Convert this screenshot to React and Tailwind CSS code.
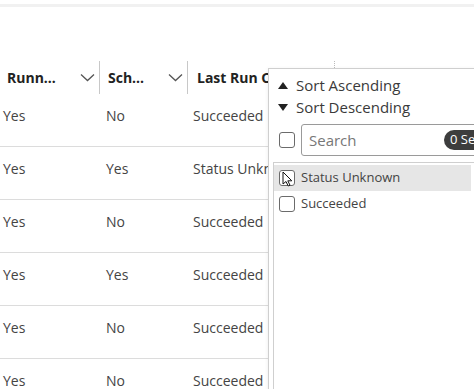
import React from "react";

const rows = [
  ["Yes", "No", "Succeeded"],
  ["Yes", "Yes", "Status Unknown"],
  ["Yes", "No", "Succeeded"],
  ["Yes", "Yes", "Succeeded"],
  ["Yes", "No", "Succeeded"],
  ["Yes", "No", "Succeeded"],
];

function Chevron() {
  return (
    <svg width="15" height="9" viewBox="0 0 15 9" className="shrink-0">
      <path d="M1 1.5 L7.5 7.5 L14 1.5" fill="none" stroke="#555" strokeWidth="1.3" />
    </svg>
  );
}

function Box({ children }) {
  return (
    <div className="relative w-[16px] h-[16px] shrink-0 rounded-[3px] border border-[#6b6b6b] bg-white">
      {children}
    </div>
  );
}

export default function App() {
  return (
    <div
      className="relative w-[474px] h-[389px] overflow-hidden bg-white text-[#3b3b3b]"
      style={{ fontFamily: '"Open Sans", "Noto Sans", sans-serif' }}
    >
      <div className="mt-[4px] h-[3px] bg-[#f1f1f1]" />

      {/* table */}
      <div className="mt-[53px] w-[268px] overflow-hidden">
        <div className="flex h-[34px] items-center text-[14px] font-bold text-[#222] whitespace-nowrap">
          <div className="flex w-[100px] shrink-0 items-center justify-between border-r border-[#c8c8c8] h-[33px] pl-[7px] pr-[4px]">
            <span>Runn...</span>
            <Chevron />
          </div>
          <div className="flex w-[88px] shrink-0 items-center justify-between border-r border-[#c8c8c8] h-[33px] pl-[8px] pr-[4px]">
            <span>Sch...</span>
            <Chevron />
          </div>
          <div className="flex shrink-0 items-center pl-[9px]">
            <span>Last Run O</span>
          </div>
        </div>
        {rows.map((r, i) => (
          <div
            key={i}
            className="flex h-[53px] items-start pt-[12px] border-b border-[#dcdcdc] text-[14px] leading-[20px] text-[#444] whitespace-nowrap"
          >
            <div className="w-[100px] shrink-0 pl-[3px]">{r[0]}</div>
            <div className="w-[88px] shrink-0 pl-[6px]">{r[1]}</div>
            <div className="shrink-0 pl-[5px]">{r[2] === "Status Unknown" ? "Status Unkn" : r[2]}</div>
          </div>
        ))}
      </div>

      {/* peeking column divider */}
      <div className="absolute left-[334px] top-[61px] h-[7px] border-l border-dotted border-[#bbb]" />

      {/* filter dropdown */}
      <div className="absolute left-[268px] top-[68px] w-[240px] h-[340px] border border-[#cfcfcf] bg-white shadow-[0_1px_4px_rgba(0,0,0,0.08)]">
        <div className="flex flex-col pt-[5px] text-[15px] text-[#3a3a3a]">
          <div className="flex h-[22px] items-center pl-[9px]">
            <svg width="10" height="7" viewBox="0 0 10 7" className="mr-[8px]">
              <path d="M0 7 L5 0 L10 7 Z" fill="#222" />
            </svg>
            <span>Sort Ascending</span>
          </div>
          <div className="flex h-[22px] items-center pl-[9px]">
            <svg width="10" height="7" viewBox="0 0 10 7" className="mr-[8px]">
              <path d="M0 0 L10 0 L5 7 Z" fill="#222" />
            </svg>
            <span>Sort Descending</span>
          </div>
        </div>
        <div className="mt-[6px] flex items-center pl-[10px] gap-[6px]">
          <Box />
          <div className="relative flex h-[32px] flex-1 items-center rounded-[3px] border border-[#9a9a9a] pl-[7px]">
            <span className="text-[15px] text-[#777]">Search</span>
            <span className="absolute left-[142px] top-[5px] rounded-full bg-[#3d3d3d] px-[6px] h-[20px] flex items-center text-[13px] text-white whitespace-nowrap">
              0 Selected
            </span>
          </div>
        </div>
        <div className="mt-[6px] ml-[4px] border-t border-l border-[#cfcfcf] h-[240px] pt-[2px] text-[13px] text-[#444]">
          <div className="flex h-[26px] items-center gap-[6px] bg-[#e6e6e6] pl-[5px] mr-[36px]">
            <Box>
              <svg width="12" height="16" viewBox="0 0 12 16" className="absolute left-[2px] top-[0px]">
                <path d="M1 1 L1 13 L4 10.5 L6.2 15 L8 14.2 L5.8 9.8 L9.8 9.8 Z" fill="#fff" stroke="#111" strokeWidth="1" strokeLinejoin="round" />
              </svg>
            </Box>
            <span>Status Unknown</span>
          </div>
          <div className="flex h-[26px] items-center gap-[6px] pl-[5px]">
            <Box />
            <span>Succeeded</span>
          </div>
        </div>
      </div>
    </div>
  );
}
